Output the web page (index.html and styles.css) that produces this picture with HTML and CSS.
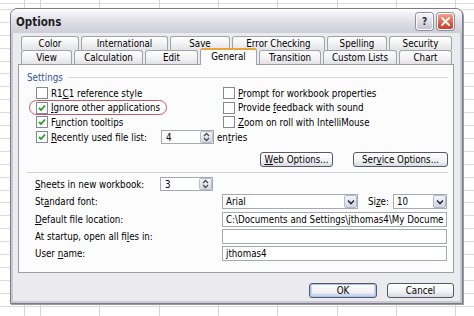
FILE: index.html
```html
<!DOCTYPE html>
<html>
<head>
<meta charset="utf-8">
<link rel="stylesheet" href="styles.css">
</head>
<body>
<div class="dialog">
  <div class="titlebar">
    <span class="title">Options</span>
    <div class="tbtns">
      <span class="tb help">?</span>
      <span class="tb close"><svg width="9" height="9" viewBox="0 0 9 9"><path d="M1 1L8 8M8 1L1 8" stroke="#fff" stroke-width="1.8" stroke-linecap="round"/></svg></span>
    </div>
  </div>
  <div class="client">
    <div class="tabs">
      <div class="tabrow">
        <span class="tab w58">Color</span>
        <span class="tab w87">International</span>
        <span class="tab w60">Save</span>
        <span class="tab w93">Error Checking</span>
        <span class="tab w60">Spelling</span>
        <span class="tab w63">Security</span>
      </div>
      <div class="tabrow">
        <span class="tab w51">View</span>
        <span class="tab w69">Calculation</span>
        <span class="tab w53">Edit</span>
        <span class="tab w57 sel">General</span>
        <span class="tab w62">Transition</span>
        <span class="tab w74">Custom Lists</span>
        <span class="tab w53">Chart</span>
      </div>
    </div>
    <div class="panel">
      <div class="group-head"><span class="group-label">Settings</span><span class="group-line"></span></div>
      <div class="checks">
        <label class="chk"><span class="box"></span><span>R1<u>C</u>1 reference style</span></label>
        <label class="chk"><span class="box"></span><span><u>P</u>rompt for workbook properties</span></label>
        <label class="chk"><span class="box on"><svg width="8" height="8" viewBox="0 0 8 8"><path d="M1 4L3 6L7 1.5" fill="none" stroke="#21a121" stroke-width="1.8"/></svg></span><span><u>I</u>gnore other applications</span><span class="ring"></span></label>
        <label class="chk"><span class="box"></span><span>Provide <u>f</u>eedback with sound</span></label>
        <label class="chk"><span class="box on"><svg width="8" height="8" viewBox="0 0 8 8"><path d="M1 4L3 6L7 1.5" fill="none" stroke="#21a121" stroke-width="1.8"/></svg></span><span>F<u>u</u>nction tooltips</span></label>
        <label class="chk"><span class="box"></span><span><u>Z</u>oom on roll with IntelliMouse</span></label>
        <div class="chk span2">
          <span class="box on"><svg width="8" height="8" viewBox="0 0 8 8"><path d="M1 4L3 6L7 1.5" fill="none" stroke="#21a121" stroke-width="1.8"/></svg></span>
          <span class="recent-label"><u>R</u>ecently used file list:</span>
          <span class="spin"><span class="spin-val">4</span><span class="spin-btn"><svg width="9" height="12" viewBox="0 0 9 12"><path d="M2 5L4.5 2.5L7 5M2 7L4.5 9.5L7 7" fill="none" stroke="#4a4a55" stroke-width="1.3"/></svg></span></span>
          <span class="entries">en<u>t</u>ries</span>
        </div>
      </div>
      <div class="btnrow">
        <span class="btn web"><u>W</u>eb Options...</span>
        <span class="btn service">Ser<u>v</u>ice Options...</span>
      </div>
      <div class="sep"></div>
      <div class="fields">
        <div class="frow">
          <span class="flabel short"><u>S</u>heets in new workbook:</span>
          <span class="spin"><span class="spin-val">3</span><span class="spin-btn"><svg width="9" height="12" viewBox="0 0 9 12"><path d="M2 5L4.5 2.5L7 5M2 7L4.5 9.5L7 7" fill="none" stroke="#4a4a55" stroke-width="1.3"/></svg></span></span>
        </div>
        <div class="frow">
          <span class="flabel">St<u>a</u>ndard font:</span>
          <span class="combo font"><span class="combo-val">Arial</span><span class="drop"><svg width="8" height="6" viewBox="0 0 8 6"><path d="M1 1.5L4 4.5L7 1.5" fill="none" stroke="#2b2b44" stroke-width="1.6"/></svg></span></span>
          <span class="size-label">Si<u>z</u>e:</span>
          <span class="combo size"><span class="combo-val">10</span><span class="drop"><svg width="8" height="6" viewBox="0 0 8 6"><path d="M1 1.5L4 4.5L7 1.5" fill="none" stroke="#2b2b44" stroke-width="1.6"/></svg></span></span>
        </div>
        <div class="frow">
          <span class="flabel"><u>D</u>efault file location:</span>
          <span class="input wide">C:\Documents and Settings\jthomas4\My Docume</span>
        </div>
        <div class="frow">
          <span class="flabel">At startup, open all fi<u>l</u>es in:</span>
          <span class="input wide"></span>
        </div>
        <div class="frow">
          <span class="flabel">User <u>n</u>ame:</span>
          <span class="input wide">jthomas4</span>
        </div>
      </div>
    </div>
    <div class="footer">
      <span class="btn ok">OK</span>
      <span class="btn cancel">Cancel</span>
    </div>
  </div>
</div>
</body>
</html>
```
FILE: styles.css
```css
html, body {
  margin: 0;
  padding: 0;
}
body {
  width: 474px;
  height: 316px;
  overflow: hidden;
  padding: 8px 0 0 10px;
  box-sizing: border-box;
  font-family: "DejaVu Sans Condensed", "DejaVu Sans", "Liberation Sans", sans-serif;
  font-size: 9.7px;
  color: #000;
  background-color: #fff;
  background-image:
    repeating-linear-gradient(90deg, #d6d6d6 0 1px, transparent 1px 59.3px),
    linear-gradient(90deg, transparent 24px, #d6d6d6 24px 25px, transparent 25px),
    repeating-linear-gradient(180deg, #dcdcdc 0 1px, transparent 1px 12.9px);
  background-position: 40px 0, 0 0, 0 9px;
}
u { text-decoration: underline; text-underline-offset: 1px; }

.dialog {
  width: 453px;
  height: 296px;
  box-sizing: border-box;
  border: 1px solid #7a7a88;
  border-radius: 7px 7px 0 0;
  background: #c9c9d3;
  display: flex;
  flex-direction: column;
  box-shadow: 1px 1px 0 #9a9aa4;
}
.titlebar {
  height: 24px;
  flex: none;
  border-radius: 6px 6px 0 0;
  background: linear-gradient(180deg, #ffffff 0%, #ececf1 25%, #dcdce4 60%, #cdcdd7 100%);
  display: flex;
  align-items: center;
  padding: 0 8px 0 5px;
}
.title {
  font-weight: bold;
  font-size: 11.5px;
  color: #1c1c26;
  flex: 1;
  padding-top: 1px;
}
.tbtns { display: flex; gap: 4px; }
.tb {
  width: 15px;
  height: 15px;
  border: 1px solid #fff;
  border-radius: 3px;
  box-shadow: 0 0 0 1px #9090a0;
  display: flex;
  align-items: center;
  justify-content: center;
}
.help {
  background: linear-gradient(180deg, #f4f4f8, #c4c6d4);
  font-weight: bold;
  font-size: 10px;
  color: #2a2a40;
}
.close {
  background: linear-gradient(180deg, #f3a08d, #d5533d 70%, #c9442f);
}

.client {
  flex: 1;
  margin: 0 2px 2px 2px;
  background: #ebebee;
  padding: 3px 6px 0 5px;
  display: flex;
  flex-direction: column;
}
.tabs { padding-left: 3px; }
.tabrow {
  display: flex;
  gap: 2px;
  height: 14px;
}
.tab {
  box-sizing: border-box;
  height: 14px;
  border: 1px solid #a0a4ac;
  border-bottom: none;
  border-radius: 3px 3px 0 0;
  background: linear-gradient(180deg, #ffffff, #f0f0f2 60%, #e2e2e6);
  text-align: center;
  line-height: 13px;
  white-space: nowrap;
}
.tab.sel {
  position: relative;
  z-index: 2;
  height: 17px;
  margin-top: -2px;
  background: #fcfcfd;
  border-top: 2px solid #e9a43c;
  line-height: 14px;
}
.w51 { width: 51px; } .w53 { width: 53px; } .w57 { width: 57px; }
.w58 { width: 58px; } .w60 { width: 60px; } .w62 { width: 62px; }
.w63 { width: 63px; } .w69 { width: 69px; } .w74 { width: 74px; }
.w87 { width: 87px; } .w93 { width: 93px; }

.panel {
  height: 209px;
  box-sizing: border-box;
  border: 1px solid #9a9ea6;
  background: #fcfcfd;
  padding: 0 5px 0 8px;
  display: flex;
  flex-direction: column;
}
.group-head {
  margin-top: 7px;
  height: 11px;
  display: flex;
  align-items: center;
}
.group-label { color: #2f55a0; padding-right: 5px; }
.group-line { flex: 1; border-top: 1px solid #d8d8dc; }

.checks {
  margin-top: 3px;
  padding-left: 9px;
  display: grid;
  grid-template-columns: 187px 1fr;
  grid-auto-rows: 14.6px;
}
.chk {
  position: relative;
  display: flex;
  align-items: center;
  white-space: nowrap;
}
.span2 { grid-column: span 2; }
.box {
  width: 10px;
  height: 10px;
  border: 1px solid #7f8a98;
  background: #fff;
  margin-right: 3px;
  flex: none;
  display: flex;
  align-items: center;
  justify-content: center;
}
.ring {
  position: absolute;
  left: -7px;
  top: -1px;
  width: 138px;
  height: 15px;
  box-sizing: border-box;
  border: 1.5px solid #c45a66;
  border-radius: 8px;
}
.recent-label { width: 110px; }
.spin {
  width: 53px;
  height: 14px;
  box-sizing: border-box;
  border: 1px solid #a3aab4;
  background: #fff;
  display: flex;
  align-items: center;
  justify-content: space-between;
  padding-left: 4px;
}
.spin-btn {
  width: 13px;
  height: 12px;
  box-sizing: border-box;
  border: 1px solid #b7bcc8;
  border-radius: 2px;
  background: linear-gradient(180deg, #f6f6fa, #d6d8e2);
  display: flex;
  align-items: center;
  justify-content: center;
}
.entries { margin-left: 3px; }

.btnrow {
  margin-top: 7.5px;
  display: flex;
  justify-content: flex-end;
  gap: 20px;
}
.btn {
  box-sizing: border-box;
  height: 15px;
  border: 1px solid #55586a;
  border-radius: 3px;
  background: linear-gradient(180deg, #ffffff, #f2f2f5 60%, #d9dae2);
  display: flex;
  align-items: center;
  justify-content: center;
  white-space: nowrap;
}
.web { width: 73px; }
.service { width: 95px; }

.sep {
  margin-top: 5px;
  border-top: 1px solid #d0d0d6;
}
.fields {
  margin-top: 4px;
  padding-left: 8px;
  display: flex;
  flex-direction: column;
  gap: 2.4px;
}
.frow {
  display: flex;
  align-items: center;
  height: 15px;
  white-space: nowrap;
}
.flabel { width: 187px; flex: none; }
.flabel.short { width: 125px; }
.combo {
  box-sizing: border-box;
  height: 15px;
  border: 1px solid #a3aab4;
  background: #fff;
  display: flex;
  align-items: center;
  padding-left: 3px;
}
.combo-val { flex: 1; }
.font { width: 136px; }
.size { width: 54px; }
.size-label { width: 35px; padding-left: 10px; box-sizing: border-box; }
.drop {
  width: 13px;
  height: 13px;
  box-sizing: border-box;
  border: 1px solid #b3b8c6;
  border-radius: 2px;
  background: linear-gradient(180deg, #f4f5fa, #d3d6e2);
  display: flex;
  align-items: center;
  justify-content: center;
}
.input {
  box-sizing: border-box;
  height: 15px;
  border: 1px solid #a3aab4;
  background: #fff;
  padding-left: 3px;
  display: flex;
  align-items: center;
  overflow: hidden;
}
.wide { width: 225px; }

.footer {
  margin-top: 10px;
  display: flex;
  justify-content: flex-end;
  gap: 10px;
}
.ok {
  width: 68px;
  box-shadow: inset 0 0 0 1px #a8c4ec, inset 0 -1px 0 2px #c8d8f2;
}
.cancel { width: 67px; }
```
